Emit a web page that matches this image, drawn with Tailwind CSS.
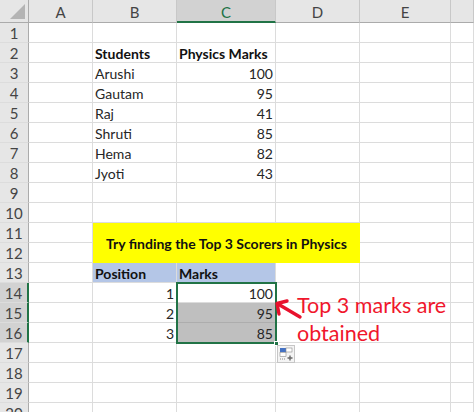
<!DOCTYPE html>
<html lang="en">
<head>
  <meta charset="UTF-8" />
  <title>Top 3 Scorers</title>
  <script src="https://cdn.jsdelivr.net/npm/@tailwindcss/browser@4"></script>
</head>
<body class="bg-white">
  <div class="relative w-[474px] h-[412px] overflow-hidden font-['Lato','Open_Sans',sans-serif] text-[14px] text-[#262626]">
    <!-- sheet grid, column sizes and rows taken from the screenshot -->
    <div class="grid grid-cols-[29px_64px_84px_99px_84px_91px_23px] grid-rows-[23px_repeat(20,20px)] [&>div]:border-r [&>div]:border-b [&>div]:border-[#dcdcdc] [&>div]:px-[2px] [&>div]:leading-[21px]">
      <!-- column headers -->
      <div class="relative !border-[#ababab] bg-[#e6e6e6]"><svg class="absolute right-[3px] bottom-[3px]" width="15" height="15"><polygon points="15,0 15,15 0,15" fill="#b4b4b4"/></svg></div>
      <div class="bg-[#e6e6e6] !border-b-[#ababab] !border-r-[#c8c8c8] text-center text-[15px] !leading-[24px] text-[#444]">A</div>
      <div class="bg-[#e6e6e6] !border-b-[#ababab] !border-r-[#c8c8c8] text-center text-[15px] !leading-[24px] text-[#444]">B</div>
      <div class="bg-[#d2d2d2] !border-b-2 !border-b-[#217346] !border-r-[#c8c8c8] text-center text-[15px] !leading-[24px] text-[#217346]">C</div>
      <div class="bg-[#e6e6e6] !border-b-[#ababab] !border-r-[#c8c8c8] text-center text-[15px] !leading-[24px] text-[#444]">D</div>
      <div class="bg-[#e6e6e6] !border-b-[#ababab] !border-r-[#c8c8c8] text-center text-[15px] !leading-[24px] text-[#444]">E</div>
      <div class="bg-[#e6e6e6] !border-b-[#ababab] !border-r-[#c8c8c8]"></div>

      <div class="bg-[#e6e6e6] !border-r-[#ababab] text-center text-[15px] text-[#444]">1</div><div></div><div></div><div></div><div></div><div></div><div></div>
      <div class="bg-[#e6e6e6] !border-r-[#ababab] text-center text-[15px] text-[#444]">2</div><div></div><div class="font-bold text-[#111]">Students</div><div class="font-bold text-[#111] whitespace-nowrap">Physics Marks</div><div></div><div></div><div></div>
      <div class="bg-[#e6e6e6] !border-r-[#ababab] text-center text-[15px] text-[#444]">3</div><div></div><div>Arushi</div><div class="text-right">100</div><div></div><div></div><div></div>
      <div class="bg-[#e6e6e6] !border-r-[#ababab] text-center text-[15px] text-[#444]">4</div><div></div><div>Gautam</div><div class="text-right">95</div><div></div><div></div><div></div>
      <div class="bg-[#e6e6e6] !border-r-[#ababab] text-center text-[15px] text-[#444]">5</div><div></div><div>Raj</div><div class="text-right">41</div><div></div><div></div><div></div>
      <div class="bg-[#e6e6e6] !border-r-[#ababab] text-center text-[15px] text-[#444]">6</div><div></div><div>Shruti</div><div class="text-right">85</div><div></div><div></div><div></div>
      <div class="bg-[#e6e6e6] !border-r-[#ababab] text-center text-[15px] text-[#444]">7</div><div></div><div>Hema</div><div class="text-right">82</div><div></div><div></div><div></div>
      <div class="bg-[#e6e6e6] !border-r-[#ababab] text-center text-[15px] text-[#444]">8</div><div></div><div>Jyoti</div><div class="text-right">43</div><div></div><div></div><div></div>
      <div class="bg-[#e6e6e6] !border-r-[#ababab] text-center text-[15px] text-[#444]">9</div><div></div><div></div><div></div><div></div><div></div><div></div>
      <div class="bg-[#e6e6e6] !border-r-[#ababab] text-center text-[15px] text-[#444]">10</div><div></div><div></div><div></div><div></div><div></div><div></div>

      <div class="bg-[#e6e6e6] !border-r-[#ababab] text-center text-[15px] text-[#444]">11</div><div></div>
      <div class="col-span-3 row-span-2 !border-0 bg-[#ffff00] flex items-center justify-center font-bold whitespace-nowrap text-[#111]">Try finding the Top 3 Scorers in Physics</div>
      <div></div><div></div>
      <div class="bg-[#e6e6e6] !border-r-[#ababab] text-center text-[15px] text-[#444]">12</div><div></div><div></div><div></div>

      <div class="bg-[#e6e6e6] !border-r-[#ababab] text-center text-[15px] text-[#444]">13</div><div></div><div class="bg-[#b4c6e7] font-bold text-[#111]">Position</div><div class="bg-[#b4c6e7] font-bold text-[#111]">Marks</div><div></div><div></div><div></div>
      <div class="bg-[#d2d2d2] !border-r-2 !border-r-[#217346] text-center text-[15px] text-[#444]">14</div><div></div><div class="text-right">1</div><div class="text-right">100</div><div></div><div></div><div></div>
      <div class="bg-[#d2d2d2] !border-r-2 !border-r-[#217346] text-center text-[15px] text-[#444]">15</div><div></div><div class="text-right">2</div><div class="bg-[#bfbfbf] !border-[#adadad] text-right">95</div><div></div><div></div><div></div>
      <div class="bg-[#d2d2d2] !border-r-2 !border-r-[#217346] text-center text-[15px] text-[#444]">16</div><div></div><div class="text-right">3</div><div class="bg-[#bfbfbf] !border-[#adadad] text-right">85</div><div></div><div></div><div></div>
      <div class="bg-[#e6e6e6] !border-r-[#ababab] text-center text-[15px] text-[#444]">17</div><div></div><div></div><div></div><div></div><div></div><div></div>
      <div class="bg-[#e6e6e6] !border-r-[#ababab] text-center text-[15px] text-[#444]">18</div><div></div><div></div><div></div><div></div><div></div><div></div>
      <div class="bg-[#e6e6e6] !border-r-[#ababab] text-center text-[15px] text-[#444]">19</div><div></div><div></div><div></div><div></div><div></div><div></div>
      <div class="bg-[#e6e6e6] !border-r-[#ababab] text-center text-[15px] text-[#444]">20</div><div></div><div></div><div></div><div></div><div></div><div></div>
    </div>

    <!-- selection box and fill handle -->
    <div class="absolute left-[176px] top-[282px] w-[101px] h-[62px] border-2 border-[#217346]"></div>
    <div class="absolute left-[274px] top-[341px] w-[5px] h-[5px] bg-[#217346] border border-white"></div>

    <!-- quick analysis button -->
    <div class="absolute left-[277px] top-[345px] w-[18px] h-[18px] bg-[#f4f4f4] border border-[#c6c6c6]">
      <svg width="16" height="16" viewBox="0 0 16 16">
        <rect x="2" y="2" width="6" height="4" fill="#4472c4"/>
        <rect x="8" y="2" width="6" height="4" fill="#fff" stroke="#8a8a8a" stroke-width="0.6"/>
        <rect x="2" y="6.5" width="6" height="4" fill="#fff" stroke="#8a8a8a" stroke-width="0.6"/>
        <path d="M2 13h6" stroke="#8a8a8a" stroke-dasharray="1 1"/>
        <path d="M12 9.5v5M9.5 12h5" stroke="#666" stroke-width="1.4"/>
      </svg>
    </div>

    <!-- red annotation -->
    <svg class="absolute left-[270px] top-[295px]" width="36" height="28" viewBox="0 0 36 28" fill="none" stroke="#e8112d" stroke-width="3.4" stroke-linecap="round" stroke-linejoin="round">
      <path d="M8 9 L30 22"/>
      <path d="M17 6 L7 8.5 L9 19"/>
    </svg>
    <div class="absolute left-[297px] top-[291px] text-[21.5px] leading-[28px] text-[#f0162c] whitespace-nowrap">Top 3 marks are<br />obtained</div>
  </div>
</body>
</html>
